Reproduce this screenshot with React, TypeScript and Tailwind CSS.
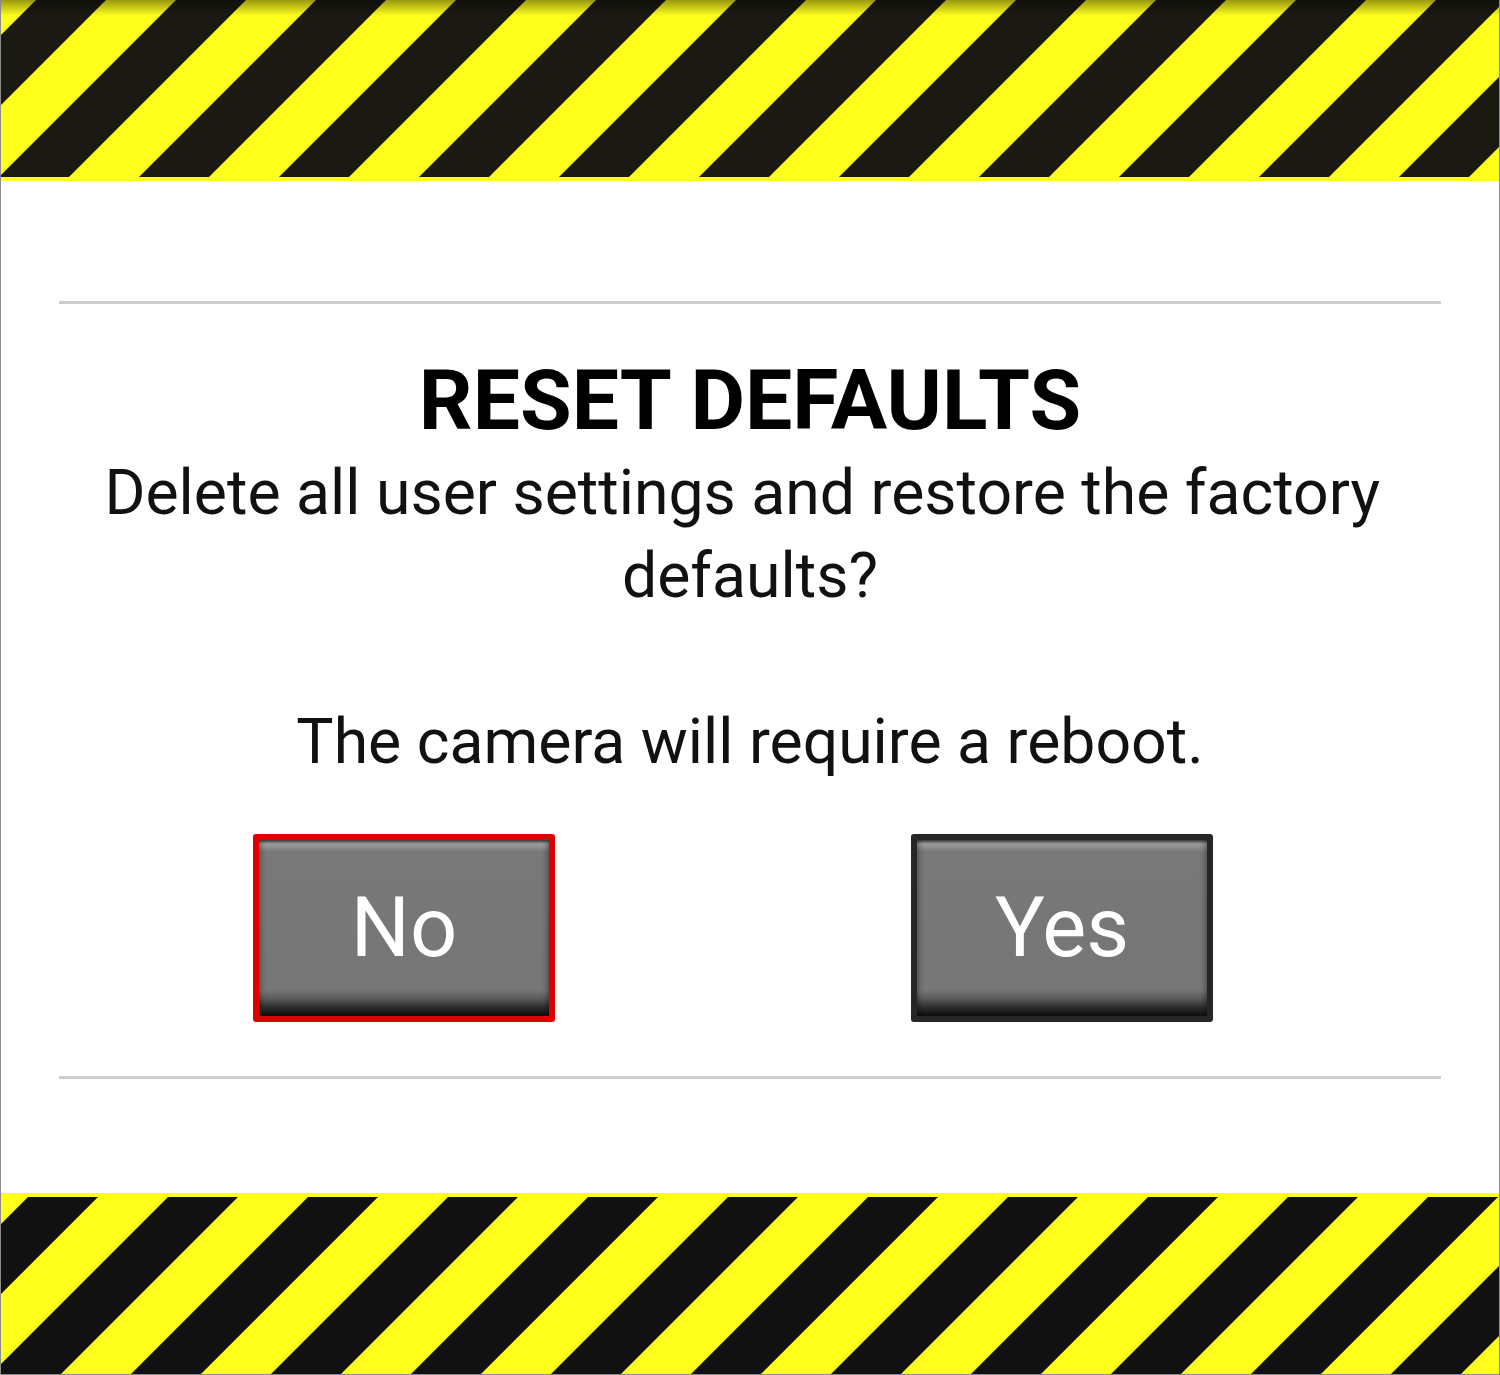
import React from "react";

function Stripes({ height, phase, black }: { height: number; phase: number; black: string }) {
  const polys: string[] = [];
  const H = height;
  for (let k = -4; k <= 14; k++) {
    const c = phase + 140 * k;
    polys.push(`${c},0 ${c + 70},0 ${c + 70 - H},${H} ${c - H},${H}`);
  }
  return (
    <svg width="100%" height={H} className="block">
      {polys.map((p, i) => (
        <polygon key={i} points={p} fill={black} />
      ))}
    </svg>
  );
}

function Btn({ label, ring }: { label: string; ring: string }) {
  return (
    <div
      className={`w-[302px] h-[188px] border-[6px] rounded-[3px] ${ring} flex items-center justify-center bg-[linear-gradient(to_bottom,#3c3c3c_0px,#9c9c9c_4px,#8a8a8a_8px,#787878_12px,#767676_150px,#5c5c5c_158px,#2a2a2a_168px,#0e0e0e_176px)] shadow-[inset_5px_0_5px_-3px_rgba(0,0,0,0.35),inset_-5px_0_5px_-3px_rgba(0,0,0,0.35)]`}
    >
      <span className="text-white text-[83px] leading-none font-normal pb-[2px]">{label}</span>
    </div>
  );
}

export default function App() {
  return (
    <div
      className="w-[1500px] h-[1375px] flex flex-col bg-white border-l border-r border-b border-[#8c8c8c] overflow-hidden"
      style={{ fontFamily: "Roboto, 'Liberation Sans', sans-serif" }}
    >
      {/* top hazard band */}
      <div className="relative h-[181px] bg-[#ffff1c] shrink-0">
        <Stripes height={177} phase={35} black="#1b1a12" />
        <div className="absolute inset-x-0 top-0 h-[16px] bg-[linear-gradient(to_bottom,rgba(0,0,0,0.4),rgba(0,0,0,0))]" />
      </div>

      {/* content */}
      <div className="flex-1 flex flex-col">
        <div className="h-[120px]" />
        <div className="mx-[58px] h-[3px] bg-[#cdcdcd]" />
        <div className="h-[47px]" />
        <div className="text-center text-black font-bold text-[84px] leading-[100px]">RESET DEFAULTS</div>
        <div className="text-center text-[#111] text-[62.5px] leading-[83px]">
          <div className="whitespace-pre">{"Delete all user settings and restore the factory\u00a0"}</div>
          <div>defaults?</div>
        </div>
        <div className="h-[83px]" />
        <div className="text-center text-[#111] text-[62.5px] leading-[83px]">The camera will require a reboot.</div>
        <div className="h-[51px]" />
        <div className="flex pl-[252px] gap-[356px]">
          <Btn label="No" ring="border-[#dc0000]" />
          <Btn label="Yes" ring="border-[#262626]" />
        </div>
        <div className="h-[54px]" />
        <div className="mx-[58px] h-[3px] bg-[#cdcdcd]" />
      </div>

      {/* bottom hazard band */}
      <div className="h-[181px] bg-[#ffff1c] pt-[4px] shrink-0">
        <Stripes height={177} phase={27} black="#111111" />
      </div>
    </div>
  );
}
